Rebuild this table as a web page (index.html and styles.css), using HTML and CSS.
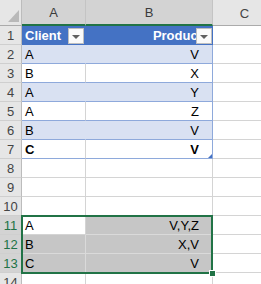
FILE: index.html
```html
<!DOCTYPE html>
<html lang="en">
<head>
<meta charset="utf-8">
<title>Sheet1</title>
<link rel="stylesheet" href="styles.css">
</head>
<body>
<div class="sheet">
  <div class="grid">
    <!-- column headers -->
    <div class="corner"><span class="corner-tri"></span></div>
    <div class="ch ch-sel">A</div>
    <div class="ch ch-sel">B</div>
    <div class="ch">C</div>

    <!-- row 1: table header -->
    <div class="rh">1</div>
    <div class="c th th-a"><span class="tt">Client</span><span class="filter"><span class="arrow"></span></span></div>
    <div class="c th th-b"><span class="tt">Product</span><span class="filter"><span class="arrow"></span></span></div>
    <div class="c"></div>

    <div class="rh">2</div>
    <div class="c tb band a">A</div>
    <div class="c tb band b tedge">V</div>
    <div class="c"></div>

    <div class="rh">3</div>
    <div class="c tb a">B</div>
    <div class="c tb b tedge">X</div>
    <div class="c"></div>

    <div class="rh">4</div>
    <div class="c tb band a">A</div>
    <div class="c tb band b tedge">Y</div>
    <div class="c"></div>

    <div class="rh">5</div>
    <div class="c tb a">A</div>
    <div class="c tb b tedge">Z</div>
    <div class="c"></div>

    <div class="rh">6</div>
    <div class="c tb band a">B</div>
    <div class="c tb band b tedge">V</div>
    <div class="c"></div>

    <div class="rh">7</div>
    <div class="c tb a bold">C</div>
    <div class="c tb b tedge bold">V<span class="resize"></span></div>
    <div class="c"></div>

    <div class="rh">8</div>
    <div class="c"></div><div class="c"></div><div class="c"></div>

    <div class="rh">9</div>
    <div class="c"></div><div class="c"></div><div class="c"></div>

    <div class="rh">10</div>
    <div class="c"></div><div class="c"></div><div class="c"></div>

    <div class="rh rh-sel">11</div>
    <div class="c a">A</div>
    <div class="c b sel">V,Y,Z</div>
    <div class="c"></div>

    <div class="rh rh-sel">12</div>
    <div class="c a sel">B</div>
    <div class="c b sel">X,V</div>
    <div class="c"></div>

    <div class="rh rh-sel">13</div>
    <div class="c a sel">C</div>
    <div class="c b sel">V</div>
    <div class="c"></div>

    <div class="rh">14</div>
    <div class="c"></div><div class="c"></div><div class="c"></div>

    <!-- selection frame over A11:B13 -->
    <div class="selection"><span class="fill-handle"></span></div>
  </div>
</div>
</body>
</html>
```

FILE: styles.css
```css
html, body {
  margin: 0;
  padding: 0;
  background: #ffffff;
  overflow: hidden;
}

.sheet {
  width: 261px;
  height: 284px;
  overflow: hidden;
  font-family: "Liberation Sans", Arial, sans-serif;
  font-size: 13px;
  color: #000;
}

.grid {
  position: relative;
  display: grid;
  grid-template-columns: 22px 64px 127px 64px;
  grid-template-rows: 26px repeat(14, 19px);
}

.grid > div {
  box-sizing: border-box;
  border-right: 1px solid #d4d4d4;
  border-bottom: 1px solid #d4d4d4;
  overflow: hidden;
  white-space: nowrap;
}

/* headers */
.corner {
  position: relative;
  background: #e6e6e6;
  border-right-color: #bcbcbc !important;
  border-bottom-color: #ababab !important;
}
.corner-tri {
  position: absolute;
  right: 2px;
  bottom: 3px;
  width: 0;
  height: 0;
  border-left: 11px solid transparent;
  border-bottom: 12px solid #b9b9b9;
}

.ch {
  background: #e6e6e6;
  color: #444444;
  display: flex;
  align-items: center;
  justify-content: center;
  border-right-color: #c4c4c4 !important;
  border-bottom-color: #ababab !important;
  padding-top: 1px;
}
.ch-sel {
  background: #d3d3d3;
  border-bottom: 2px solid #217346 !important;
  color: #3b3b3b;
}

.rh {
  background: #e6e6e6;
  color: #444444;
  display: flex;
  align-items: flex-end;
  justify-content: center;
  line-height: 16px;
  border-right-color: #bcbcbc !important;
  border-bottom-color: #cfcfcf !important;
}
.rh-sel {
  background: #d3d3d3;
  color: #217346;
}

/* cells */
.c {
  display: flex;
  align-items: flex-end;
  line-height: 16px;
  background: #ffffff;
}
.a {
  padding-left: 3px;
}
.b {
  justify-content: flex-end;
  padding-right: 13px;
}
.bold {
  font-weight: bold;
}

/* table */
.th {
  position: relative;
  background: #4472c4;
  color: #ffffff;
  font-weight: bold;
  border-bottom-color: #4472c4 !important;
}
.th-a {
  padding-left: 3px;
  border-right-color: #4472c4 !important;
}
.th-b {
  justify-content: flex-end;
  padding-right: 10px;
  border-right-color: #4472c4 !important;
}
.filter {
  position: absolute;
  right: 0;
  top: 2px;
  width: 16px;
  height: 16px;
  box-sizing: border-box;
  background: #fafafa;
  border: 1px solid #bfbfbf;
  display: flex;
  align-items: center;
  justify-content: center;
}
.th-a .filter {
  right: 1px;
}
.arrow {
  width: 0;
  height: 0;
  border-left: 4px solid transparent;
  border-right: 4px solid transparent;
  border-top: 4px solid #5f5f5f;
  margin-top: 1px;
}

.tb {
  border-bottom-color: #8ea9db !important;
}
.band {
  background: #d9e1f2;
}
.band.a {
  border-right-color: #d9e1f2 !important;
}
.tedge {
  position: relative;
  border-right-color: #8ea9db !important;
}
.resize {
  position: absolute;
  right: 0;
  bottom: 0;
  width: 0;
  height: 0;
  border-left: 4px solid transparent;
  border-bottom: 4px solid #4472c4;
}

/* selected range */
.sel {
  background: #c6c6c6;
  border-right-color: #dadada !important;
  border-bottom-color: #dadada !important;
}
.selection {
  position: absolute;
  left: 21px;
  top: 215px;
  width: 192px;
  height: 59px;
  box-sizing: border-box;
  border: 2px solid #217346 !important;
  pointer-events: none;
  overflow: visible !important;
}
.fill-handle {
  position: absolute;
  right: -5px;
  bottom: -5px;
  width: 5px;
  height: 5px;
  background: #217346;
  border: 1px solid #ffffff;
}
```
